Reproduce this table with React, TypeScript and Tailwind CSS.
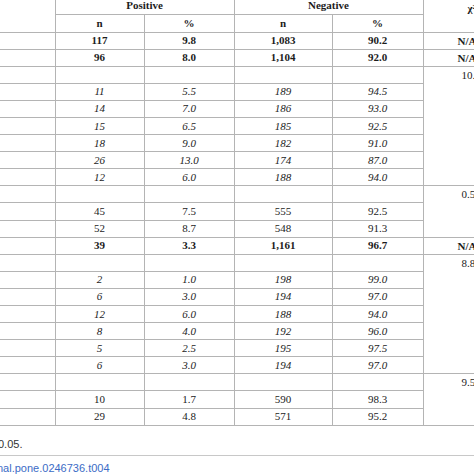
import React from 'react';

type RowStyle = 'bold' | 'italic' | 'plain';

interface Row {
  n1: string;
  p1: string;
  n2: string;
  p2: string;
  style: RowStyle;
  // chi-square cell only on the first row of a group, spanning it
  chi?: { text: string; span: number; bold?: boolean };
}

const rows: Row[] = [
  { n1: '117', p1: '9.8', n2: '1,083', p2: '90.2', style: 'bold', chi: { text: 'N/A', span: 1, bold: true } },
  { n1: '96', p1: '8.0', n2: '1,104', p2: '92.0', style: 'bold', chi: { text: 'N/A', span: 1, bold: true } },
  { n1: '', p1: '', n2: '', p2: '', style: 'plain', chi: { text: '10.34', span: 7 } },
  { n1: '11', p1: '5.5', n2: '189', p2: '94.5', style: 'italic' },
  { n1: '14', p1: '7.0', n2: '186', p2: '93.0', style: 'italic' },
  { n1: '15', p1: '6.5', n2: '185', p2: '92.5', style: 'italic' },
  { n1: '18', p1: '9.0', n2: '182', p2: '91.0', style: 'italic' },
  { n1: '26', p1: '13.0', n2: '174', p2: '87.0', style: 'italic' },
  { n1: '12', p1: '6.0', n2: '188', p2: '94.0', style: 'italic' },
  { n1: '', p1: '', n2: '', p2: '', style: 'plain', chi: { text: '0.56', span: 3 } },
  { n1: '45', p1: '7.5', n2: '555', p2: '92.5', style: 'plain' },
  { n1: '52', p1: '8.7', n2: '548', p2: '91.3', style: 'plain' },
  { n1: '39', p1: '3.3', n2: '1,161', p2: '96.7', style: 'bold', chi: { text: 'N/A', span: 1, bold: true } },
  { n1: '', p1: '', n2: '', p2: '', style: 'plain', chi: { text: '8.82', span: 7 } },
  { n1: '2', p1: '1.0', n2: '198', p2: '99.0', style: 'italic' },
  { n1: '6', p1: '3.0', n2: '194', p2: '97.0', style: 'italic' },
  { n1: '12', p1: '6.0', n2: '188', p2: '94.0', style: 'italic' },
  { n1: '8', p1: '4.0', n2: '192', p2: '96.0', style: 'italic' },
  { n1: '5', p1: '2.5', n2: '195', p2: '97.5', style: 'italic' },
  { n1: '6', p1: '3.0', n2: '194', p2: '97.0', style: 'italic' },
  { n1: '', p1: '', n2: '', p2: '', style: 'plain', chi: { text: '9.51', span: 3 } },
  { n1: '10', p1: '1.7', n2: '590', p2: '98.3', style: 'plain' },
  { n1: '29', p1: '4.8', n2: '571', p2: '95.2', style: 'plain' },
];

const styleClass = (s: RowStyle) =>
  s === 'bold' ? 'font-bold' : s === 'italic' ? 'italic' : '';

const cell = 'h-[17.1px] p-0 text-center align-middle border-b border-r border-[#b4b4b4]';

export default function App() {
  return (
    <div className="w-[474px] h-[474px] overflow-hidden bg-white text-[#1c1c1c]">
      {/* Table */}
      <div className="-mt-[3px] w-[517px]">
        <table
          className="table-fixed border-collapse w-[517px] text-[11px] leading-[13px]"
          style={{ fontFamily: '"Liberation Serif", "Times New Roman", serif' }}
        >
          <colgroup>
            <col className="w-[55px]" />
            <col className="w-[89px]" />
            <col className="w-[90px]" />
            <col className="w-[98px]" />
            <col className="w-[91px]" />
            <col className="w-[94px]" />
          </colgroup>
          <thead>
            <tr>
              <td rowSpan={2} className="p-0 border-b border-r border-[#b4b4b4]" />
              <th colSpan={2} className="h-[17px] p-0 font-bold text-center border-b border-r border-[#b4b4b4]">
                Positive
              </th>
              <th colSpan={2} className="h-[17px] p-0 font-bold text-center border-b border-r border-[#b4b4b4]">
                Negative
              </th>
              <th rowSpan={2} className="p-0 pt-[5px] pl-[44px] align-top font-bold text-left border-b border-[#b4b4b4]">
                χ²
              </th>
            </tr>
            <tr>
              <th className="h-[18px] p-0 font-bold text-center border-b border-r border-[#b4b4b4]">n</th>
              <th className="h-[18px] p-0 font-bold text-center border-b border-r border-[#b4b4b4]">%</th>
              <th className="h-[18px] p-0 font-bold text-center border-b border-r border-[#b4b4b4]">n</th>
              <th className="h-[18px] p-0 font-bold text-center border-b border-r border-[#b4b4b4]">%</th>
            </tr>
          </thead>
          <tbody>
            {rows.map((r, i) => (
              <tr key={i} className={styleClass(r.style)}>
                <td className="h-[17.1px] p-0 border-b border-r border-[#b4b4b4]" />
                <td className={cell}>{r.n1}</td>
                <td className={cell}>{r.p1}</td>
                <td className={cell}>{r.n2}</td>
                <td className={cell}>{r.p2}</td>
                {r.chi && (
                  <td
                    rowSpan={r.chi.span}
                    className={`p-0 pt-[2px] align-top text-left not-italic border-b border-[#b4b4b4] ${
                      r.chi.bold ? 'font-bold pl-[34px]' : 'font-normal pl-[38px]'
                    }`}
                  >
                    {r.chi.text}
                  </td>
                )}
              </tr>
            ))}
          </tbody>
        </table>
      </div>

      {/* Footnote + doi link */}
      <div
        className="text-[11px] leading-[13px]"
        style={{ fontFamily: '"Liberation Sans", Arial, sans-serif' }}
      >
        <div className="mt-[12px] -ml-[2px] text-[#333]">0.05.</div>
        <div className="mt-[4px] border-t border-[#c8c8c8]" />
        <div className="mt-[6px] -ml-[3px] text-[#3b6bc6]">nal.pone.0246736.t004</div>
      </div>
    </div>
  );
}
